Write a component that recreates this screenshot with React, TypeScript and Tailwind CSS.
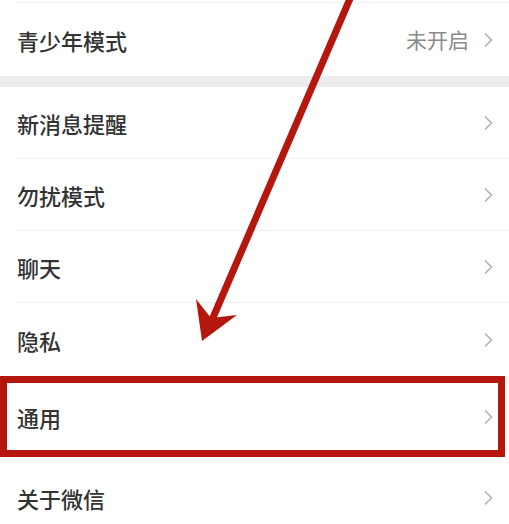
import React from 'react';

const font = { fontFamily: '"Noto Sans CJK SC", "Noto Sans", sans-serif' };

const Chevron: React.FC = () => (
    <svg width="10" height="16" viewBox="0 0 10 16" className="shrink-0">
        <path d="M2 1.5 L8.5 8 L2 14.5" fill="none" stroke="#b4b4b4" strokeWidth="1.7" />
    </svg>
);

const Row: React.FC<{ label: string; value?: string; h: string }> = ({ label, value, h }) => (
    <div className={`flex items-center justify-between pl-[17px] pr-[16px] ${h}`}>
        <span className="text-[22px] font-medium text-[#333333] leading-none">{label}</span>
        <div className="flex items-center gap-[14px]">
            {value && <span className="text-[21px] text-[#8a8a8a] leading-none">{value}</span>}
            <Chevron />
        </div>
    </div>
);

const Divider: React.FC = () => <div className="ml-[16px] h-px bg-[#efefef]" />;

const App: React.FC = () => {
    return (
        <div className="relative w-[509px] h-[524px] overflow-hidden bg-white" style={font}>
            <div className="h-[2px]" />
            <Divider />
            <Row label="青少年模式" value="未开启" h="h-[73px]" />
            <div className="h-[11px] bg-[#ededed]" />
            <Row label="新消息提醒" h="h-[71px]" />
            <Divider />
            <Row label="勿扰模式" h="h-[71px]" />
            <Divider />
            <Row label="聊天" h="h-[71px]" />
            <Divider />
            <Row label="隐私" h="h-[73px]" />
            {/* highlighted row */}
            <div className="mr-[4px] h-[81px] border-[7px] border-[#b5170f] flex items-center justify-between pl-[10px] pr-[5px]">
                <span className="text-[22px] font-medium text-[#333333] leading-none">通用</span>
                <Chevron />
            </div>
            <Row label="关于微信" h="h-[82px]" />

            {/* pointer arrow */}
            <svg className="absolute inset-0 pointer-events-none" width="509" height="524" viewBox="0 0 509 524">
                <line x1="352" y1="-6" x2="212" y2="320" stroke="#b5170f" strokeWidth="7" />
                <polygon points="202,341 196,299 211,318 237,315" fill="#b5170f" />
            </svg>
        </div>
    );
};

export default App;
